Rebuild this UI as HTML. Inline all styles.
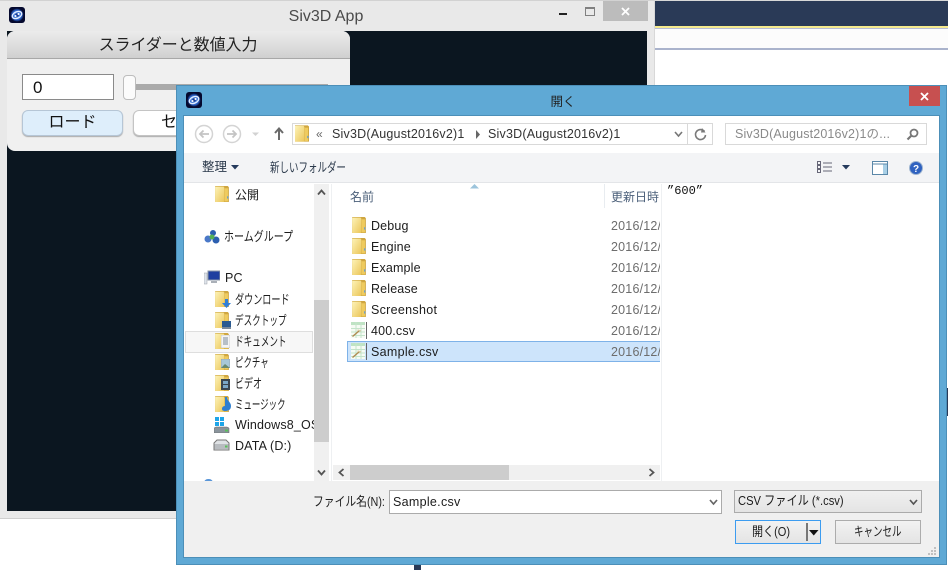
<!DOCTYPE html>
<html lang="ja"><head><meta charset="utf-8"><title>Siv3D App</title>
<style>
html,body{margin:0;padding:0;background:#fff}
#r{position:relative;width:948px;height:570px;overflow:hidden;background:#fff;font-family:"Liberation Sans","Noto Sans CJK JP",sans-serif;color:#1a1a1a}
#r div,#r svg{position:absolute}
.t{white-space:nowrap;font-size:12.5px;line-height:16px;color:#1c1c1c;letter-spacing:.15px;transform-origin:left center}
.g{color:#6d6d6d}
.clip{overflow:hidden}
.k{font-size:12px;letter-spacing:0}
.n{font-size:13px;letter-spacing:0}
</style></head><body>
<div id="r">
<svg width="0" height="0" style="left:0;top:0">
<defs>
<linearGradient id="fb" x1="0" x2="1" y1="0" y2="1"><stop offset="0" stop-color="#fdf3b8"/><stop offset="1" stop-color="#ebc65a"/></linearGradient>
<radialGradient id="ap" cx=".5" cy=".5" r=".5"><stop offset="0" stop-color="#7fb2f5"/><stop offset=".7" stop-color="#2f68d0"/><stop offset="1" stop-color="#0a1a50"/></radialGradient>
<symbol id="folder" viewBox="1 1 12 14"><path d="M1 1h11l1 1v13H1z" fill="#cfa640"/><path d="M1 1.500h7.500l.5 1v12l-.5.500H1z" fill="url(#fb)"/><path d="M9.300 3h2.900v11.500H9.300z" fill="#efcb5e"/><rect x="11.500" y="10" width="1" height="2" fill="#5d9ad6"/></symbol>
<symbol id="app" viewBox="0 0 16 16"><rect width="16" height="16" rx="3" fill="#05092e"/><circle cx="8" cy="8" r="6.500" fill="url(#ap)"/><ellipse cx="8" cy="8" rx="5" ry="3.200" fill="none" stroke="#e6efff" stroke-width="1.300" transform="rotate(-25 8 8)"/><circle cx="8" cy="8" r="1.800" fill="#1a3a90"/><circle cx="6.500" cy="9" r="1" fill="#fff"/><circle cx="9.500" cy="7" r="1" fill="#fff"/></symbol>
<symbol id="csv" viewBox="0 0 16 17"><rect x="0" y="0" width="14" height="16" fill="#f6fbf4"/><rect x="0" y="0" width="14" height="3" fill="#bfe3c4"/><path d="M0 6.500h14M0 10h14M0 13.500h14M5 0v16M10 0v16" stroke="#c4e4ca" stroke-width="1"/><path d="M15.500 0v17" stroke="#666" stroke-width="1"/><path d="M1.500 14.500l7-6" stroke="#b08a50" stroke-width="1.400"/><path d="M6.500 8l3.500 1" stroke="#d8c8a0" stroke-width="1.400"/></symbol>
</defs></svg>

<!-- right background window -->
<div style="left:655px;top:0;width:293px;height:26px;background:#2a3a57;border-top:1px solid #d8d8d8;box-sizing:border-box"></div>
<div style="left:655px;top:26px;width:293px;height:2px;background:#f5ea8e"></div>
<div style="left:655px;top:28px;width:293px;height:1px;background:#b6bdd8"></div>
<div style="left:655px;top:29px;width:293px;height:19px;background:#fcfcfc"></div>
<div style="left:655px;top:48px;width:293px;height:2px;background:#aab3cc"></div>

<!-- Siv3D app window -->
<div style="left:0;top:0;width:655px;height:519px;background:#e9e9e9;border-top:1px solid #d2d2d2;border-bottom:1px solid #cfcfcf;border-right:1px solid #d8d8d8;box-sizing:border-box"></div>
<svg style="left:9px;top:7px" width="16" height="16"><use href="#app"/></svg>
<div class="t" style="left:226px;top:8px;width:200px;text-align:center;font-size:16px;line-height:18px;color:#4a4a4a;letter-spacing:0">Siv3D App</div>
<div style="left:559px;top:13px;width:8px;height:2px;background:#222"></div>
<div style="left:585px;top:7px;width:8px;height:6px;border:1px solid #808080;border-top:2px solid #808080;box-sizing:content-box"></div>
<div style="left:603px;top:1px;width:45px;height:20px;background:#bcbcbc"></div>
<svg style="left:621px;top:7px" width="9" height="9"><path d="M1 1l7 7M8 1l-7 7" stroke="#fff" stroke-width="1.800"/></svg>
<div style="left:7px;top:31px;width:640px;height:480px;background:#0b1620"></div>

<!-- GUI panel -->
<div style="left:7px;top:31px;width:343px;height:120px;background:#f0f0f0;border-radius:8px;overflow:hidden">
  <div style="left:0;top:0;width:343px;height:27px;background:linear-gradient(#ececec,#d0d0d0);border-bottom:1px solid #a8a8a8"></div>
</div>
<div class="t" style="left:58px;top:36px;width:240px;text-align:center;font-size:16px;line-height:19px;color:#222;letter-spacing:-.05px">スライダーと数値入力</div>
<div style="left:22px;top:74px;width:92px;height:26px;background:#fff;border:1px solid #8a8a8a;box-sizing:border-box"></div>
<div class="t" style="left:33px;top:78px;font-size:17px;line-height:19px;color:#111;letter-spacing:0">0</div>
<div style="left:128px;top:84px;width:200px;height:6px;background:#aaa"></div>
<div style="left:123px;top:75px;width:13px;height:25px;background:#fbfbfb;border:1px solid #bdbdbd;border-radius:4px;box-sizing:border-box"></div>
<div style="left:22px;top:110px;width:101px;height:26px;background:#deeefb;border:1px solid #b6c6d6;border-radius:6px;box-sizing:border-box;box-shadow:0 1px 1px #aaa"></div>
<div class="t" style="left:22px;top:114px;width:101px;text-align:center;font-size:16px;line-height:18px;color:#111;letter-spacing:0">ロード</div>
<div style="left:133px;top:110px;width:90px;height:26px;background:#fff;border:1px solid #c4c4c4;border-radius:6px;box-sizing:border-box;box-shadow:0 1px 1px #aaa"></div>
<div class="t" style="left:161px;top:114px;font-size:16px;line-height:18px;color:#111;letter-spacing:0">セ</div>

<!-- stub and edge -->
<div style="left:414px;top:564px;width:7px;height:6px;background:#2a3a57"></div>
<div style="left:947px;top:388px;width:1px;height:28px;background:#2a3a57"></div>

<!-- dialog -->
<div style="left:176px;top:85px;width:771px;height:480px;background:#5fa9d5;border:1px solid #4c8fb8;box-sizing:border-box"></div>
<svg style="left:186px;top:92px" width="16" height="16"><use href="#app"/></svg>
<div class="t" style="left:463px;top:94px;width:200px;text-align:center;font-size:12.5px;color:#222;letter-spacing:0">開く</div>
<div style="left:909px;top:86px;width:31px;height:20px;background:#c75050"></div>
<svg style="left:920px;top:92px" width="9" height="9"><path d="M1 1l7 7M8 1l-7 7" stroke="#fff" stroke-width="1.800"/></svg>

<div style="left:184px;top:116px;width:755px;height:441px;background:#fff;outline:1px solid #4c8fb8"></div>

<!-- nav bar -->
<svg style="left:194px;top:124px" width="96" height="20" fill="none">
<circle cx="10" cy="10" r="8.500" stroke="#d4d4d4" stroke-width="1.500"/><path d="M15 10H6M9.500 6.500L6 10l3.500 3.500" stroke="#c4c4c4" stroke-width="1.800"/>
<circle cx="38" cy="10" r="8.500" stroke="#d4d4d4" stroke-width="1.500"/><path d="M33 10h9M38.500 6.500L42 10l-3.500 3.500" stroke="#c4c4c4" stroke-width="1.800"/>
<path d="M58 8.500h7l-3.500 3.500z" fill="#d2d2d2"/>
<path d="M85 16V5M81 9l4-4.500L89 9" stroke="#6a6a6a" stroke-width="2"/>
</svg>
<div style="left:292px;top:123px;width:421px;height:22px;background:#fff;border:1px solid #d9d9d9;box-sizing:border-box"></div>
<svg style="left:295px;top:125px" width="14" height="17"><use href="#folder"/></svg>
<div class="t g" style="left:316px;top:126px;font-size:12px;color:#666">«</div>
<div class="t" style="left:332px;top:126px;color:#333;letter-spacing:.2px">Siv3D(August2016v2)1</div>
<svg style="left:475px;top:130px" width="6" height="9"><path d="M1 0l4 4.500L1 9z" fill="#666"/></svg>
<div class="t" style="left:488px;top:126px;color:#333;letter-spacing:.2px">Siv3D(August2016v2)1</div>
<svg style="left:674px;top:131px" width="9" height="7" fill="none"><path d="M1 1l3.500 4L8 1" stroke="#777" stroke-width="1.600"/></svg>
<div style="left:687px;top:124px;width:1px;height:20px;background:#d9d9d9"></div>
<svg style="left:694px;top:127px" width="13" height="14" fill="none"><path d="M10.500 4.500A5 5 0 1 0 11.500 8" stroke="#7a7a7a" stroke-width="1.600"/><path d="M8 1l3.500 4.500H7z" fill="#7a7a7a"/></svg>
<div style="left:725px;top:123px;width:202px;height:22px;background:#fff;border:1px solid #d9d9d9;box-sizing:border-box"></div>
<div class="t" style="left:735px;top:126px;color:#8a8a8a">Siv3D(August2016v2)1の...</div>
<svg style="left:906px;top:128px" width="13" height="13" fill="none"><circle cx="8" cy="5" r="3.500" stroke="#777" stroke-width="1.800"/><path d="M5.500 7.500L1.500 11.500" stroke="#777" stroke-width="2.200"/></svg>

<!-- command bar -->
<div style="left:184px;top:153px;width:755px;height:30px;background:#f3f4f6;border-bottom:1px solid #e3e5e8;box-sizing:border-box"></div>
<div class="t" style="left:202px;top:159px;color:#2c3a4c;letter-spacing:0">整理</div>
<svg style="left:231px;top:165px" width="9" height="5"><path d="M0 0h8L4 4.500z" fill="#253a5c"/></svg>
<div class="t n" style="left:270px;top:160px;color:#2c3a4c;transform:scaleX(.73)">新しいフォルダー</div>
<svg style="left:817px;top:161px" width="16" height="13" fill="none" stroke="#667"><rect x=".5" y=".5" width="3" height="3"/><rect x=".5" y="4.500" width="3" height="3"/><rect x=".5" y="8.500" width="3" height="3"/><path d="M6 2h9M6 6h9M6 10h9"/></svg>
<svg style="left:842px;top:165px" width="9" height="5"><path d="M0 0h8L4 4.500z" fill="#253a5c"/></svg>
<svg style="left:872px;top:161px" width="16" height="14" fill="none"><rect x=".5" y=".5" width="15" height="13" fill="#fff" stroke="#5a87a8"/><rect x="11" y="3" width="4" height="10" fill="#a8cfe6"/><path d="M1 3h14" stroke="#5a87a8"/></svg>
<svg style="left:909px;top:161px" width="14" height="14"><circle cx="7" cy="7" r="6.500" fill="#2f62c0" stroke="#9db4d0"/><text x="7" y="11" font-size="10" font-weight="700" text-anchor="middle" fill="#fff" font-family="Liberation Sans">?</text></svg>

<!-- sidebar -->
<div class="clip" style="left:184px;top:184px;width:130px;height:297px;background:#fff">
  <div style="left:1px;top:147px;width:126px;height:20px;background:#f7f7f7;border:1px solid #dedede;box-sizing:content-box"></div>
</div>
<div class="clip" style="left:184px;top:184px;width:130px;height:297px">
  <svg style="left:31px;top:2px" width="14" height="16"><use href="#folder"/></svg>
  <div class="t k" style="left:51px;top:3px">公開</div>
  <svg style="left:20px;top:45px" width="16" height="16"><circle cx="9" cy="4" r="3" fill="#2c5fb0"/><circle cx="4" cy="10" r="3.500" fill="#4a78c8"/><circle cx="12" cy="11" r="3.500" fill="#2c5fb0"/><circle cx="8" cy="8" r="2.500" fill="#55b055"/></svg>
  <div class="t n" style="left:40px;top:45px;transform:scaleX(.77)">ホームグループ</div>
  <svg style="left:20px;top:86px" width="16" height="16"><rect x="4" y="1" width="12" height="9" fill="#1f3fa0" stroke="#8a94a4"/><rect x="0" y="3" width="3" height="11" fill="#dfe4ea" stroke="#9aa0a8" stroke-width=".5"/><rect x="7" y="11" width="6" height="2" fill="#aab0b8"/></svg>
  <div class="t" style="left:41px;top:86px;font-size:12.5px">PC</div>

  <svg style="left:31px;top:107px" width="14" height="16"><use href="#folder"/></svg>
  <svg style="left:38px;top:115px" width="9" height="9"><path d="M3 0h3v4h3L4.500 9 0 4h3z" fill="#2f7fd8"/></svg>
  <div class="t n" style="left:51px;top:108px;transform:scaleX(.7)">ダウンロード</div>
  <svg style="left:31px;top:128px" width="14" height="16"><use href="#folder"/></svg>
  <svg style="left:38px;top:137px" width="9" height="8"><rect width="9" height="6" fill="#2a5a90"/><rect y="6" width="9" height="2" fill="#7a8a9a"/></svg>
  <div class="t n" style="left:51px;top:129px;transform:scaleX(.66)">デスクトップ</div>
  <svg style="left:31px;top:149px" width="14" height="16"><use href="#folder"/></svg>
  <svg style="left:37px;top:151px" width="9" height="13"><rect width="9" height="13" fill="#f4f4f4" stroke="#aaa" stroke-width=".5"/><path d="M2 3h5M2 5h5M2 7h5M2 9h5" stroke="#7a8a9a"/></svg>
  <div class="t n" style="left:51px;top:150px;transform:scaleX(.66)">ドキュメント</div>
  <svg style="left:31px;top:170px" width="14" height="16"><use href="#folder"/></svg>
  <svg style="left:37px;top:175px" width="9" height="9"><rect width="9" height="9" fill="#a8c8d8" stroke="#889" stroke-width=".5"/><path d="M0 9l4-4 5 4z" fill="#6a8a70"/></svg>
  <div class="t n" style="left:51px;top:171px;transform:scaleX(.65)">ピクチャ</div>
  <svg style="left:31px;top:191px" width="14" height="16"><use href="#folder"/></svg>
  <svg style="left:37px;top:195px" width="9" height="11"><rect width="9" height="11" fill="#3a4650"/><rect x="2" y="2" width="5" height="3" fill="#7aa8c8"/><rect x="2" y="6" width="5" height="3" fill="#7aa8c8"/></svg>
  <div class="t n" style="left:51px;top:192px;transform:scaleX(.69)">ビデオ</div>
  <svg style="left:31px;top:212px" width="14" height="16"><use href="#folder"/></svg>
  <svg style="left:38px;top:213px" width="9" height="14"><path d="M3 0h2c0 4 4 5 4 9s-3 5-6 5-3-1.500-3-2.500S1 9 3 9z" fill="#2f7fd0"/></svg>
  <div class="t n" style="left:51px;top:213px;transform:scaleX(.65)">ミュージック</div>
  <svg style="left:30px;top:233px" width="16" height="16"><path d="M1 0h4v4H1zM6 0h4v4H6zM1 5h4v4H1zM6 5h4v4H6z" fill="#1ea5e8"/><path d="M0 11l2-1h11l2 1v5H0z" fill="#8a949c" stroke="#666" stroke-width=".5"/><rect x="11" y="12.500" width="3" height="2" fill="#5ac05a"/></svg>
  <div class="t" style="left:51px;top:233px">Windows8_OS</div>
  <svg style="left:29px;top:255px" width="17" height="12"><path d="M1 4l3-3h9l3 3v7H1z" fill="#dfe2e5" stroke="#777"/><rect x="1.500" y="5" width="14" height="5" fill="#b8bcc0"/><rect x="12" y="6.500" width="2.500" height="2" fill="#5ac05a"/></svg>
  <div class="t" style="left:51px;top:254px">DATA (D:)</div>
  <div style="left:20px;top:295px;width:9px;height:4px;background:#5a96d8;border-radius:4px 4px 0 0"></div>
</div>
<!-- sidebar scrollbar -->
<div style="left:314px;top:184px;width:15px;height:297px;background:#f0f0f0"></div>
<div style="left:314px;top:300px;width:15px;height:142px;background:#cdcdcd"></div>
<svg style="left:317px;top:189px" width="9" height="7" fill="none"><path d="M1 5.500l3.500-4L8 5.500" stroke="#555" stroke-width="1.800"/></svg>
<svg style="left:317px;top:469px" width="9" height="7" fill="none"><path d="M1 1.500l3.500 4L8 1.500" stroke="#555" stroke-width="1.800"/></svg>
<div style="left:331px;top:184px;width:1px;height:297px;background:#eef0f2"></div>

<!-- file list -->
<svg style="left:470px;top:184px" width="9" height="5"><path d="M0 4.500L4.500 0 9 4.500z" fill="#9cc4dc"/></svg>
<div class="t k" style="left:350px;top:189px;color:#4c607a">名前</div>
<div style="left:604px;top:184px;width:1px;height:24px;background:#e8ecf0"></div>
<div class="t k" style="left:611px;top:189px;color:#4c607a">更新日時</div>

<div style="left:347px;top:341px;width:313px;height:21px;background:#cde4fb;border:1px solid #7eb2e8;border-right:none;box-sizing:border-box"></div>

<svg style="left:352px;top:217px" width="14" height="16"><use href="#folder"/></svg>
<svg style="left:352px;top:238px" width="14" height="16"><use href="#folder"/></svg>
<svg style="left:352px;top:259px" width="14" height="16"><use href="#folder"/></svg>
<svg style="left:352px;top:280px" width="14" height="16"><use href="#folder"/></svg>
<svg style="left:352px;top:301px" width="14" height="16"><use href="#folder"/></svg>
<svg style="left:351px;top:322px" width="16" height="17"><use href="#csv"/></svg>
<svg style="left:351px;top:343px" width="16" height="17"><use href="#csv"/></svg>

<div class="t" style="left:371px;top:218px">Debug</div>
<div class="t" style="left:371px;top:239px">Engine</div>
<div class="t" style="left:371px;top:260px">Example</div>
<div class="t" style="left:371px;top:281px">Release</div>
<div class="t" style="left:371px;top:302px;letter-spacing:.3px">Screenshot</div>
<div class="t" style="left:371px;top:323px">400.csv</div>
<div class="t" style="left:371px;top:344px;letter-spacing:.3px">Sample.csv</div>

<div class="clip" style="left:611px;top:216px;width:49px;height:146px">
  <div class="t g" style="left:0;top:2px;letter-spacing:.2px">2016/12/</div>
  <div class="t g" style="left:0;top:23px;letter-spacing:.2px">2016/12/</div>
  <div class="t g" style="left:0;top:44px;letter-spacing:.2px">2016/12/</div>
  <div class="t g" style="left:0;top:65px;letter-spacing:.2px">2016/12/</div>
  <div class="t g" style="left:0;top:86px;letter-spacing:.2px">2016/12/</div>
  <div class="t g" style="left:0;top:107px;letter-spacing:.2px">2016/12/</div>
  <div class="t g" style="left:0;top:128px;letter-spacing:.2px">2016/12/</div>
</div>
<div style="left:661px;top:184px;width:1px;height:297px;background:#eef0f2"></div>

<!-- horizontal scrollbar -->
<div style="left:333px;top:465px;width:327px;height:15px;background:#f0f0f0"></div>
<div style="left:350px;top:465px;width:159px;height:15px;background:#cdcdcd"></div>
<svg style="left:338px;top:468px" width="7" height="9" fill="none"><path d="M5.500 1L1.500 4.500l4 3.500" stroke="#555" stroke-width="1.800"/></svg>
<svg style="left:648px;top:468px" width="7" height="9" fill="none"><path d="M1.500 1l4 3.500-4 3.500" stroke="#555" stroke-width="1.800"/></svg>

<!-- preview -->
<div class="t" style="left:667px;top:184px;font-family:'Liberation Mono',monospace;font-size:12px;line-height:14px;color:#111;letter-spacing:0">”600”</div>

<!-- bottom -->
<div style="left:184px;top:481px;width:755px;height:76px;background:#f0f0f0"></div>
<div class="t n" style="left:313px;top:494px;color:#222;transform:scaleX(.83)">ファイル名(N):</div>
<div style="left:389px;top:490px;width:333px;height:24px;background:#fff;border:1px solid #ababab;box-sizing:border-box"></div>
<div class="t" style="left:393px;top:494px;letter-spacing:.3px">Sample.csv</div>
<svg style="left:709px;top:499px" width="9" height="7" fill="none"><path d="M1 1l3.500 4L8 1" stroke="#666" stroke-width="1.700"/></svg>
<div style="left:734px;top:490px;width:188px;height:23px;background:linear-gradient(#f0f0f0,#e4e4e4);border:1px solid #ababab;box-sizing:border-box"></div>
<div class="t n" style="left:738px;top:493px;transform:scaleX(.86)">CSV ファイル (*.csv)</div>
<svg style="left:909px;top:499px" width="9" height="7" fill="none"><path d="M1 1l3.500 4L8 1" stroke="#555" stroke-width="1.700"/></svg>
<div style="left:735px;top:520px;width:86px;height:24px;background:linear-gradient(#f2f2f2,#e4e4e4);border:1px solid #3c9cf0;box-sizing:border-box"></div>
<div class="t n" style="left:752px;top:524px;transform:scaleX(.85)">開く(O)</div>
<div style="left:806px;top:523px;width:2px;height:18px;background:#777"></div>
<svg style="left:809px;top:530px" width="10" height="6"><path d="M0 0h9.500L4.750 5.500z" fill="#111"/></svg>
<div style="left:835px;top:520px;width:86px;height:24px;background:linear-gradient(#f2f2f2,#e4e4e4);border:1px solid #acacac;box-sizing:border-box"></div>
<div class="t n" style="left:854px;top:524px;transform:scaleX(.73)">キャンセル</div>
<svg style="left:927px;top:546px" width="10" height="10" fill="#c0c0c0"><rect x="7" y="1" width="2" height="2"/><rect x="4" y="4" width="2" height="2"/><rect x="7" y="4" width="2" height="2"/><rect x="1" y="7" width="2" height="2"/><rect x="4" y="7" width="2" height="2"/><rect x="7" y="7" width="2" height="2"/></svg>
</div>
</body></html>
